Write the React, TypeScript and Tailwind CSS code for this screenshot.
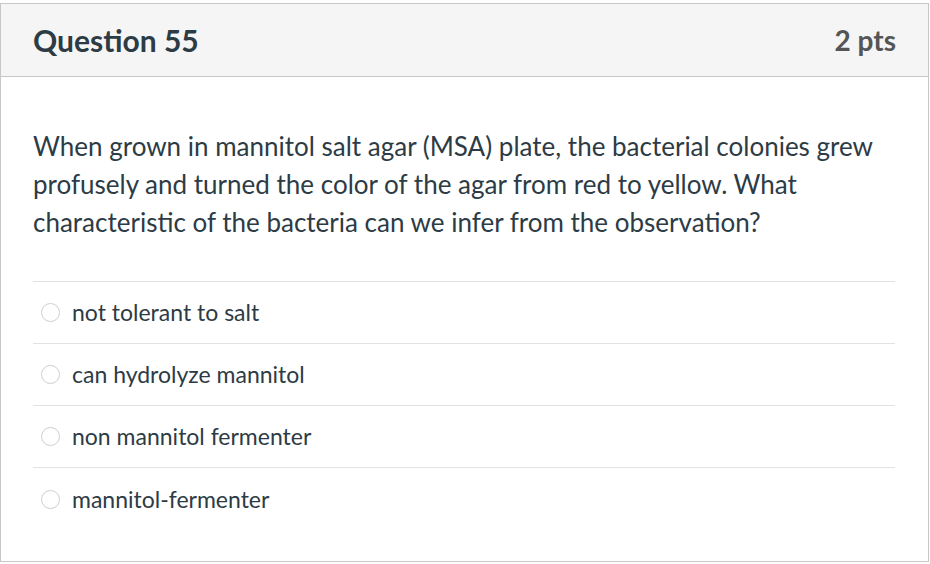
const options = [
  "not tolerant to salt",
  "can hydrolyze mannitol",
  "non mannitol fermenter",
  "mannitol-fermenter",
];

export default function App() {
  return (
    <div className="h-[564px] w-[930px] bg-white pt-[3px] font-['Lato','Liberation_Sans',sans-serif] text-[#2d3b45]">
      <div className="h-[559px] w-[929px] border border-[#c7c7c7]">
        <div className="flex h-[73px] items-center justify-between border-b border-[#c7c7c7] bg-[#f5f5f5] px-8">
          <h2 className="text-[30px] font-bold">Question 55</h2>
          <span className="text-[28px] font-bold text-[#555]">2 pts</span>
        </div>
        <div className="px-8 pt-[50px]">
          <p className="w-[862px] text-[26px] leading-[38px]">
            When grown in mannitol salt agar (MSA) plate, the bacterial colonies grew
            profusely and turned the color of the agar from red to yellow. What
            characteristic of the bacteria can we infer from the observation?
          </p>
          <ul className="mt-[40px] w-[862px] border-t border-[#e2e2e2]">
            {options.map((o, i) => (
              <li
                key={o}
                className={`flex h-[62px] items-center gap-3 pl-[8px] ${i < options.length - 1 ? "border-b border-[#e2e2e2]" : ""}`}
              >
                <span className="h-[19px] w-[19px] rounded-full border border-[#cfcfcf] bg-white" />
                <span className="text-[23px]">{o}</span>
              </li>
            ))}
          </ul>
        </div>
      </div>
    </div>
  );
}
